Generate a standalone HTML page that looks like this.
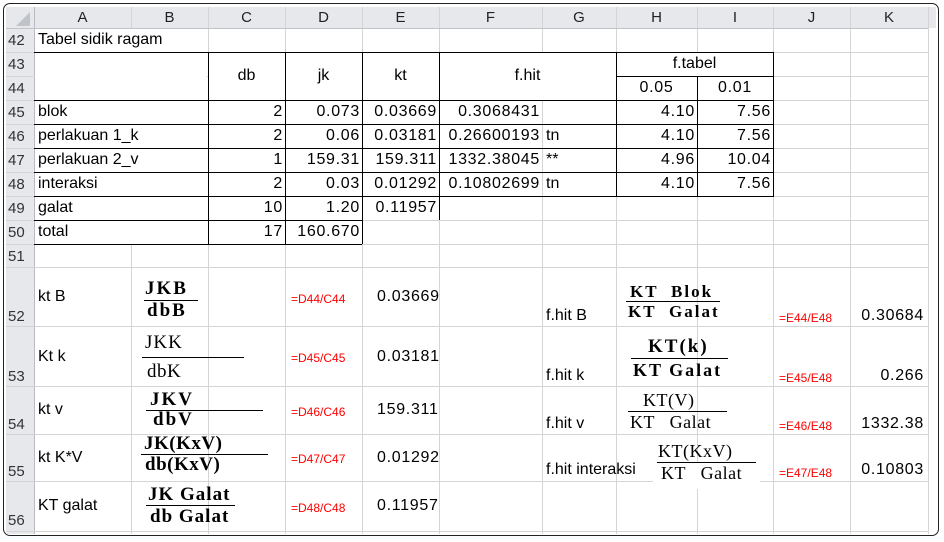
<!DOCTYPE html>
<html><head><meta charset="utf-8"><style>
body{margin:0;width:944px;height:542px;background:#fff;overflow:hidden;position:relative;font-family:"Liberation Sans",sans-serif;font-size:16px;color:#000}
.f{position:absolute;left:3px;top:3px;width:936px;height:533px;border:1.5px solid #222;border-radius:7px;box-sizing:border-box}
.a{position:absolute;white-space:nowrap;line-height:18px}
.vl{position:absolute;width:1px;background:#d4d4d4}
.hl{position:absolute;height:1px;background:#d4d4d4}
.bv{position:absolute;width:1px;background:#000}
.bh{position:absolute;height:1px;background:#000}
.hd{position:absolute;background:#e6e8ec}
.ch{position:absolute;top:7px;height:21px;line-height:21px;text-align:center;color:#222;font-size:15px}
.rn{position:absolute;left:8px;color:#333;font-size:15px;line-height:18px}
.r{text-align:right;letter-spacing:0.7px}
.n{letter-spacing:0.7px}
.red{color:#f00;font-size:12px}
.s{font-family:"Liberation Serif",serif;font-size:19px;letter-spacing:0.5px;line-height:20px}
.sb{font-family:"Liberation Serif",serif;font-size:19px;font-weight:bold;letter-spacing:2px;line-height:20px}
.ln{position:absolute;height:1px;background:#000}
</style></head><body>
<div class="f"></div>
<div class="hd" style="left:6px;top:7px;width:930px;height:21px"></div>
<div class="hd" style="left:6px;top:7px;width:28px;height:527px"></div>
<div style="position:absolute;left:16px;top:12px;width:0;height:0;border-left:14px solid transparent;border-bottom:14px solid #c0c3c8"></div>
<div class="ch" style="left:34px;width:97px">A</div>
<div class="ch" style="left:131px;width:77px">B</div>
<div class="ch" style="left:208px;width:77px">C</div>
<div class="ch" style="left:285px;width:77px">D</div>
<div class="ch" style="left:362px;width:77px">E</div>
<div class="ch" style="left:439px;width:103px">F</div>
<div class="ch" style="left:542px;width:74px">G</div>
<div class="ch" style="left:616px;width:81px">H</div>
<div class="ch" style="left:697px;width:76px">I</div>
<div class="ch" style="left:773px;width:77px">J</div>
<div class="ch" style="left:850px;width:78px">K</div>
<div class="vl" style="left:34px;top:7px;height:527px;background:#b8bcc2"></div>
<div class="vl" style="left:131px;top:7px;height:527px"></div>
<div class="vl" style="left:208px;top:7px;height:527px"></div>
<div class="vl" style="left:285px;top:7px;height:527px"></div>
<div class="vl" style="left:362px;top:7px;height:527px"></div>
<div class="vl" style="left:439px;top:7px;height:527px"></div>
<div class="vl" style="left:542px;top:7px;height:527px"></div>
<div class="vl" style="left:616px;top:7px;height:527px"></div>
<div class="vl" style="left:697px;top:7px;height:527px"></div>
<div class="vl" style="left:773px;top:7px;height:527px"></div>
<div class="vl" style="left:850px;top:7px;height:527px"></div>
<div class="vl" style="left:928px;top:7px;height:527px"></div>
<div class="hl" style="left:6px;top:28px;width:922px;background:#c0c4ca"></div>
<div class="hl" style="left:6px;top:52px;width:922px"></div>
<div class="hl" style="left:6px;top:76px;width:922px"></div>
<div class="hl" style="left:6px;top:100px;width:922px"></div>
<div class="hl" style="left:6px;top:124px;width:922px"></div>
<div class="hl" style="left:6px;top:148px;width:922px"></div>
<div class="hl" style="left:6px;top:172px;width:922px"></div>
<div class="hl" style="left:6px;top:196px;width:922px"></div>
<div class="hl" style="left:6px;top:220px;width:922px"></div>
<div class="hl" style="left:6px;top:244px;width:922px"></div>
<div class="hl" style="left:6px;top:267px;width:922px"></div>
<div class="hl" style="left:6px;top:326px;width:922px"></div>
<div class="hl" style="left:6px;top:386px;width:922px"></div>
<div class="hl" style="left:6px;top:434px;width:922px"></div>
<div class="hl" style="left:6px;top:481px;width:922px"></div>
<div class="hl" style="left:6px;top:531px;width:922px"></div>
<div class="a" style="left:35px;top:53px;width:172px;height:47px;background:#fff"></div>
<div class="a" style="left:35px;top:29px;width:172px;height:23px;background:#fff"></div>
<div class="a" style="left:209px;top:53px;width:76px;height:47px;background:#fff"></div>
<div class="a" style="left:286px;top:53px;width:76px;height:47px;background:#fff"></div>
<div class="a" style="left:363px;top:53px;width:76px;height:47px;background:#fff"></div>
<div class="a" style="left:440px;top:53px;width:176px;height:47px;background:#fff"></div>
<div class="a" style="left:617px;top:53px;width:156px;height:23px;background:#fff"></div>
<div class="a" style="left:35px;top:101px;width:172px;height:143px;background:#fff"></div>
<div class="rn" style="top:32px">42</div>
<div class="rn" style="top:56px">43</div>
<div class="rn" style="top:80px">44</div>
<div class="rn" style="top:104px">45</div>
<div class="rn" style="top:128px">46</div>
<div class="rn" style="top:152px">47</div>
<div class="rn" style="top:176px">48</div>
<div class="rn" style="top:200px">49</div>
<div class="rn" style="top:224px">50</div>
<div class="rn" style="top:248px">51</div>
<div class="rn" style="top:308px">52</div>
<div class="rn" style="top:368px">53</div>
<div class="rn" style="top:416px">54</div>
<div class="rn" style="top:463px">55</div>
<div class="rn" style="top:512px">56</div>
<div class="bh" style="left:34px;top:52px;width:582px"></div>
<div class="bh" style="left:616px;top:52px;width:158px"></div>
<div class="bh" style="left:616px;top:76px;width:158px"></div>
<div class="bh" style="left:34px;top:100px;width:740px"></div>
<div class="bh" style="left:34px;top:124px;width:740px"></div>
<div class="bh" style="left:34px;top:148px;width:740px"></div>
<div class="bh" style="left:34px;top:172px;width:740px"></div>
<div class="bh" style="left:34px;top:196px;width:740px"></div>
<div class="bh" style="left:34px;top:220px;width:328px"></div>
<div class="bh" style="left:34px;top:244px;width:328px"></div>
<div class="bv" style="left:208px;top:52px;height:192px"></div>
<div class="bv" style="left:285px;top:52px;height:192px"></div>
<div class="bv" style="left:362px;top:52px;height:192px"></div>
<div class="bv" style="left:439px;top:52px;height:168px"></div>
<div class="bv" style="left:616px;top:52px;height:144px"></div>
<div class="bv" style="left:697px;top:76px;height:120px"></div>
<div class="bv" style="left:773px;top:52px;height:144px"></div>
<div class="a" style="left:38px;top:31px">Tabel sidik ragam</div>
<div class="a" style="left:208px;width:77px;top:67px;text-align:center">db</div>
<div class="a" style="left:285px;width:77px;top:67px;text-align:center">jk</div>
<div class="a" style="left:362px;width:77px;top:67px;text-align:center">kt</div>
<div class="a" style="left:439px;width:177px;top:67px;text-align:center">f.hit</div>
<div class="a" style="left:616px;width:157px;top:55px;text-align:center">f.tabel</div>
<div class="a n" style="left:616px;width:81px;top:79px;text-align:center">0.05</div>
<div class="a n" style="left:697px;width:76px;top:79px;text-align:center">0.01</div>
<div class="a" style="left:38px;top:103px">blok</div>
<div class="a" style="left:38px;top:127px">perlakuan 1_k</div>
<div class="a" style="left:38px;top:151px">perlakuan 2_v</div>
<div class="a" style="left:38px;top:175px">interaksi</div>
<div class="a" style="left:38px;top:199px">galat</div>
<div class="a" style="left:38px;top:223px">total</div>
<div class="a r" style="right:661px;top:103px">2</div>
<div class="a r" style="right:661px;top:127px">2</div>
<div class="a r" style="right:661px;top:151px">1</div>
<div class="a r" style="right:661px;top:175px">2</div>
<div class="a r" style="right:661px;top:199px">10</div>
<div class="a r" style="right:661px;top:223px">17</div>
<div class="a r" style="right:584px;top:103px">0.073</div>
<div class="a r" style="right:584px;top:127px">0.06</div>
<div class="a r" style="right:584px;top:151px">159.31</div>
<div class="a r" style="right:584px;top:175px">0.03</div>
<div class="a r" style="right:584px;top:199px">1.20</div>
<div class="a r" style="right:584px;top:223px">160.670</div>
<div class="a r" style="right:507px;top:103px">0.03669</div>
<div class="a r" style="right:507px;top:127px">0.03181</div>
<div class="a r" style="right:507px;top:151px">159.311</div>
<div class="a r" style="right:507px;top:175px">0.01292</div>
<div class="a r" style="right:507px;top:199px">0.11957</div>
<div class="a r" style="right:404px;top:103px">0.3068431</div>
<div class="a r" style="right:404px;top:127px">0.26600193</div>
<div class="a r" style="right:404px;top:151px">1332.38045</div>
<div class="a r" style="right:404px;top:175px">0.10802699</div>
<div class="a" style="left:546px;top:127px">tn</div>
<div class="a" style="left:546px;top:151px">**</div>
<div class="a" style="left:546px;top:175px">tn</div>
<div class="a r" style="right:249px;top:103px">4.10</div>
<div class="a r" style="right:249px;top:127px">4.10</div>
<div class="a r" style="right:249px;top:151px">4.96</div>
<div class="a r" style="right:249px;top:175px">4.10</div>
<div class="a r" style="right:173px;top:103px">7.56</div>
<div class="a r" style="right:173px;top:127px">7.56</div>
<div class="a r" style="right:173px;top:151px">10.04</div>
<div class="a r" style="right:173px;top:175px">7.56</div>
<div class="a" style="left:38px;top:288px">kt B</div>
<div class="a" style="left:38px;top:348px">Kt k</div>
<div class="a" style="left:38px;top:401px">kt v</div>
<div class="a" style="left:38px;top:449px">kt K*V</div>
<div class="a" style="left:38px;top:497px">KT galat</div>
<div class="a sb" style="left:145px;top:279px">JKB</div><div class="ln" style="left:144px;top:300px;width:54px"></div><div class="a sb" style="left:147px;top:301px">dbB</div>
<div class="a s" style="left:145px;top:333px;letter-spacing:1px">JKK</div><div class="ln" style="left:142px;top:357px;width:102px"></div><div class="a s" style="left:147px;top:362px">dbK</div>
<div class="a sb" style="left:150px;top:390px">JKV</div><div class="ln" style="left:146px;top:410px;width:117px"></div><div class="a sb" style="left:153px;top:410px">dbV</div>
<div class="a sb" style="left:144px;top:434px;letter-spacing:0.5px">JK(KxV)</div><div class="ln" style="left:141px;top:454px;width:127px"></div><div class="a sb" style="left:145px;top:455px;letter-spacing:0.5px">db(KxV)</div>
<div class="a sb" style="left:148px;top:485px;letter-spacing:1px">JK Galat</div><div class="ln" style="left:146px;top:505px;width:89px"></div><div class="a sb" style="left:150px;top:507px;letter-spacing:1px">db Galat</div>
<div class="a red" style="left:291px;top:290px">=D44/C44</div>
<div class="a red" style="left:291px;top:349px">=D45/C45</div>
<div class="a red" style="left:291px;top:403px">=D46/C46</div>
<div class="a red" style="left:291px;top:450px">=D47/C47</div>
<div class="a red" style="left:291px;top:499px">=D48/C48</div>
<div class="a n" style="left:377px;top:288px">0.03669</div>
<div class="a n" style="left:377px;top:348px">0.03181</div>
<div class="a n" style="left:377px;top:401px">159.311</div>
<div class="a n" style="left:377px;top:449px">0.01292</div>
<div class="a n" style="left:377px;top:497px">0.11957</div>
<div class="a" style="left:546px;top:307px">f.hit B</div>
<div class="a" style="left:546px;top:367px">f.hit k</div>
<div class="a" style="left:546px;top:415px">f.hit v</div>
<div class="a" style="left:546px;top:461px">f.hit interaksi</div>
<div class="a sb" style="left:630px;top:282px;font-size:17px">KT&nbsp; Blok</div><div class="ln" style="left:626px;top:301px;width:94px"></div><div class="a sb" style="left:628px;top:302px;font-size:17px">KT&nbsp; Galat</div>
<div class="a sb" style="left:648px;top:337px;font-size:19px">KT(k)</div><div class="ln" style="left:631px;top:358px;width:97px"></div><div class="a sb" style="left:633px;top:360px;font-size:18px">KT Galat</div>
<div class="a s" style="left:643px;top:390px;font-size:18px">KT(V)</div><div class="ln" style="left:628px;top:411px;width:99px"></div><div class="a s" style="left:630px;top:412px;font-size:18px">KT &nbsp;&nbsp;Galat</div>
<div class="a" style="left:653px;top:463px;width:107px;height:26px;background:#fff"></div>
<div class="a s" style="left:658px;top:441px;font-size:18px">KT(KxV)</div><div class="ln" style="left:657px;top:462px;width:99px"></div><div class="a s" style="left:661px;top:463px;font-size:18px">KT &nbsp;&nbsp;Galat</div>
<div class="a red" style="left:779px;top:309px">=E44/E48</div>
<div class="a red" style="left:779px;top:369px">=E45/E48</div>
<div class="a red" style="left:779px;top:417px">=E46/E48</div>
<div class="a red" style="left:779px;top:464px">=E47/E48</div>
<div class="a r" style="right:20px;top:307px">0.30684</div>
<div class="a r" style="right:20px;top:367px">0.266</div>
<div class="a r" style="right:20px;top:415px">1332.38</div>
<div class="a r" style="right:20px;top:461px">0.10803</div>
</body></html>
